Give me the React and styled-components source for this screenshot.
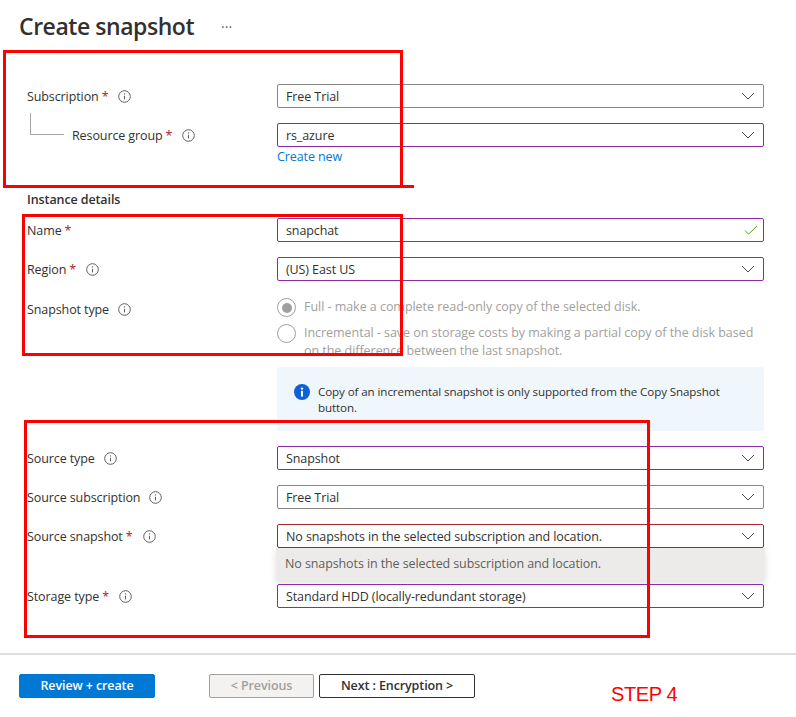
import React from "react"
import styled, { createGlobalStyle } from "styled-components"

const purple = "#8a2da5"
const grey = "#8a8886"
const text = "#323130"

const GlobalStyle = createGlobalStyle`
  html, body {
    margin: 0;
    background: #fff;
  }
  body {
    font-family: "Open Sans", "Noto Sans", sans-serif;
    font-size: 12.5px;
    letter-spacing: -0.1px;
    color: ${text};
  }
`

const Chevron = () => (
  <ChevronSvg viewBox="0 0 14 8">
    <path d="M1 1l6 6 6-6" fill="none" stroke="#4a4a4a" strokeWidth="1" />
  </ChevronSvg>
)

const Check = () => (
  <CheckSvg viewBox="0 0 14 10">
    <path d="M1 5.5l3.6 3.6L13 1" fill="none" stroke="#57a300" strokeWidth="1" />
  </CheckSvg>
)

const InfoIcon = () => (
  <InfoSvg viewBox="0 0 13 13">
    <circle cx="6.5" cy="6.5" r="5.8" fill="none" stroke="#605e5c" strokeWidth="1" />
    <path d="M6.5 5.8v3.6" stroke="#605e5c" strokeWidth="1" />
    <circle cx="6.5" cy="3.9" r="0.7" fill="#605e5c" />
  </InfoSvg>
)

const Label = ({ name, required }) => (
  <LabelText>
    {name}
    {required && <Star>*</Star>}
    <InfoIcon />
  </LabelText>
)

const Select = ({ value, border }) => (
  <Field $border={border}>
    <FieldText>{value}</FieldText>
    <Chevron />
  </Field>
)

export default function App() {
  return (
    <Page>
      <GlobalStyle />
      <Header>
        <Title>Create snapshot</Title>
        <Dots>···</Dots>
      </Header>

      <Form>
        <Row>
          <Label name="Subscription" required />
          <Select value="Free Trial" border={grey} />
        </Row>
        <Row>
          <Indented>
            <TreeLine />
            <Label name="Resource group" required />
          </Indented>
          <Select value="rs_azure" border={purple} />
        </Row>
        <CreateNew>Create new</CreateNew>

        <SectionTitle>Instance details</SectionTitle>
        <Row>
          <LabelText>
            Name<Star>*</Star>
          </LabelText>
          <Field $border={purple}>
            <FieldText>snapchat</FieldText>
            <Check />
          </Field>
        </Row>
        <Row>
          <Label name="Region" required />
          <Select value="(US) East US" border={purple} />
        </Row>

        <RadioRow>
          <RadioLabel>
            <Label name="Snapshot type" />
          </RadioLabel>
          <RadioGroup>
            <RadioOption>
              <Radio $checked />
              <span>Full - make a complete read-only copy of the selected disk.</span>
            </RadioOption>
            <RadioOption>
              <Radio />
              <span>
                Incremental - save on storage costs by making a partial copy of the disk based on
                the difference between the last snapshot.
              </span>
            </RadioOption>
          </RadioGroup>
        </RadioRow>

        <Row $tall>
          <span />
          <Notice>
            <NoticeIcon viewBox="0 0 16 16">
              <circle cx="8" cy="8" r="8" fill="#0f62d6" />
              <rect x="7" y="6.8" width="2" height="5.8" fill="#fff" />
              <circle cx="8" cy="4.6" r="1.2" fill="#fff" />
            </NoticeIcon>
            <span>Copy of an incremental snapshot is only supported from the Copy Snapshot button.</span>
          </Notice>
        </Row>

        <Row>
          <Label name="Source type" />
          <Select value="Snapshot" border={purple} />
        </Row>
        <Row>
          <Label name="Source subscription" />
          <Select value="Free Trial" border={grey} />
        </Row>
        <Row $flush>
          <Label name="Source snapshot" required />
          <Select value="No snapshots in the selected subscription and location." border="#a4262c" />
        </Row>
        <MenuRow>
          <span />
          <Menu>No snapshots in the selected subscription and location.</Menu>
        </MenuRow>
        <Row>
          <Label name="Storage type" required />
          <Select value="Standard HDD (locally-redundant storage)" border={purple} />
        </Row>
      </Form>

      <Footer>
        <PrimaryButton>Review + create</PrimaryButton>
        <PrevButton>&lt; Previous</PrevButton>
        <NextButton>Next : Encryption &gt;</NextButton>
      </Footer>

      <Step>STEP 4</Step>

      <Mark $l={3} $t={50} $w={400} $h={138} />
      <MarkTail />
      <Mark $l={22} $t={214} $w={381} $h={142} />
      <Mark $l={24} $t={420} $w={626} $h={218} />
    </Page>
  )
}

const Page = styled.div`
  position: relative;
  width: 796px;
  height: 717px;
  overflow: hidden;
`

const Header = styled.header`
  display: flex;
  align-items: center;
  height: 32px;
  padding: 10px 0 0 19px;
`

const Title = styled.h1`
  margin: 0;
  font-size: 23px;
  font-weight: 600;
  letter-spacing: -0.45px;
  color: ${text};
`

const Dots = styled.span`
  margin-left: 27px;
  font-size: 14px;
  letter-spacing: 0;
  color: #605e5c;
`

const Form = styled.main`
  padding: 42px 32px 0 27px;
`

const Row = styled.div`
  display: grid;
  grid-template-columns: 250px 487px;
  align-items: center;
  height: ${({ $tall }) => ($tall ? "64px" : "24px")};
  margin-bottom: ${({ $flush }) => ($flush ? "0" : "15px")};
`

const LabelText = styled.div`
  display: flex;
  align-items: center;
`

const Star = styled.span`
  margin: 0 1px 0 3px;
  color: #a4262c;
`

const InfoSvg = styled.svg`
  width: 13px;
  height: 13px;
  margin-left: 9px;
  flex: none;
`

const Indented = styled.div`
  position: relative;
  padding-left: 45px;
`

const TreeLine = styled.span`
  position: absolute;
  left: 3px;
  top: -14px;
  width: 33px;
  height: 21px;
  border-left: 1px solid #a6a6a6;
  border-bottom: 1px solid #a6a6a6;
`

const Field = styled.div`
  display: flex;
  align-items: center;
  justify-content: space-between;
  box-sizing: border-box;
  height: 24px;
  padding: 0 8px 0 8px;
  border: 1px solid ${({ $border }) => $border};
  border-radius: 2px;
`

const FieldText = styled.span`
  white-space: nowrap;
`

const ChevronSvg = styled.svg`
  width: 14px;
  height: 10px;
  flex: none;
`

const CheckSvg = styled.svg`
  width: 14px;
  height: 10px;
  margin-right: -3px;
  flex: none;
`

const CreateNew = styled.a`
  display: block;
  margin: -14px 0 0 250px;
  height: 18px;
  line-height: 18px;
  color: #0078d4;
`

const SectionTitle = styled.h2`
  margin: 25px 0 0;
  height: 27px;
  font-size: 12.5px;
  font-weight: 600;
  line-height: 17px;
  color: ${text};
`

const RadioRow = styled.div`
  display: grid;
  grid-template-columns: 250px 487px;
  align-items: start;
  box-sizing: border-box;
  height: 71px;
  padding-top: 2px;
`

const RadioLabel = styled.div`
  padding-top: 3px;
`

const RadioGroup = styled.div`
  display: flex;
  flex-direction: column;
  gap: 7px;
  color: #a19f9d;
  line-height: 18px;
  letter-spacing: -0.04px;
`

const RadioOption = styled.div`
  display: flex;
  gap: 8px;
  align-items: flex-start;
`

const Radio = styled.span`
  position: relative;
  flex: none;
  box-sizing: border-box;
  width: 19px;
  height: 19px;
  border: 1px solid #a19f9d;
  border-radius: 50%;
  &::after {
    content: "";
    display: ${({ $checked }) => ($checked ? "block" : "none")};
    position: absolute;
    inset: 3.5px;
    border-radius: 50%;
    background: #a19f9d;
  }
`

const Notice = styled.div`
  display: flex;
  gap: 8px;
  align-items: flex-start;
  box-sizing: border-box;
  height: 64px;
  padding: 17px 30px 0 17px;
  background: #eff6fc;
  border-radius: 2px;
  color: ${text};
  font-size: 11.6px;
  line-height: 15.5px;
`

const NoticeIcon = styled.svg`
  width: 16px;
  height: 16px;
  flex: none;
`

const MenuRow = styled.div`
  display: grid;
  grid-template-columns: 249px 489px;
  margin-bottom: 4px;
`

const Menu = styled.div`
  box-sizing: border-box;
  height: 32px;
  padding-left: 9px;
  line-height: 32px;
  background: #edebe9;
  color: #605e5c;
  box-shadow: 0 3px 7px rgba(0, 0, 0, 0.13);
`

const Footer = styled.footer`
  display: flex;
  align-items: flex-start;
  box-sizing: border-box;
  height: 64px;
  margin-top: 45px;
  padding: 19px 0 0 19px;
  border-top: 2px solid #e1dfdd;
`

const Button = styled.button`
  box-sizing: border-box;
  height: 24px;
  padding: 0 0 2px;
  border-radius: 2px;
  font-family: inherit;
  font-size: 12.5px;
  font-weight: 600;
  letter-spacing: -0.1px;
`

const PrimaryButton = styled(Button)`
  width: 136px;
  margin-right: 54px;
  border: 1px solid #0078d4;
  background: #0078d4;
  color: #fff;
`

const PrevButton = styled(Button)`
  width: 105px;
  margin-right: 5px;
  border: 1px solid #a19f9d;
  background: #f3f2f1;
  color: #a19f9d;
`

const NextButton = styled(Button)`
  width: 156px;
  border: 1px solid ${text};
  background: #fff;
  color: ${text};
`

const Step = styled.div`
  position: absolute;
  left: 611px;
  top: 681px;
  font-family: "Liberation Sans", sans-serif;
  font-size: 20px;
  letter-spacing: -0.4px;
  line-height: 26px;
  color: #ff0000;
`

const Mark = styled.div`
  position: absolute;
  left: ${({ $l }) => $l}px;
  top: ${({ $t }) => $t}px;
  width: ${({ $w }) => $w}px;
  height: ${({ $h }) => $h}px;
  box-sizing: border-box;
  border: 3px solid #ff0000;
  pointer-events: none;
`

const MarkTail = styled.div`
  position: absolute;
  left: 402px;
  top: 185px;
  width: 12px;
  height: 3px;
  background: #ff0000;
`
